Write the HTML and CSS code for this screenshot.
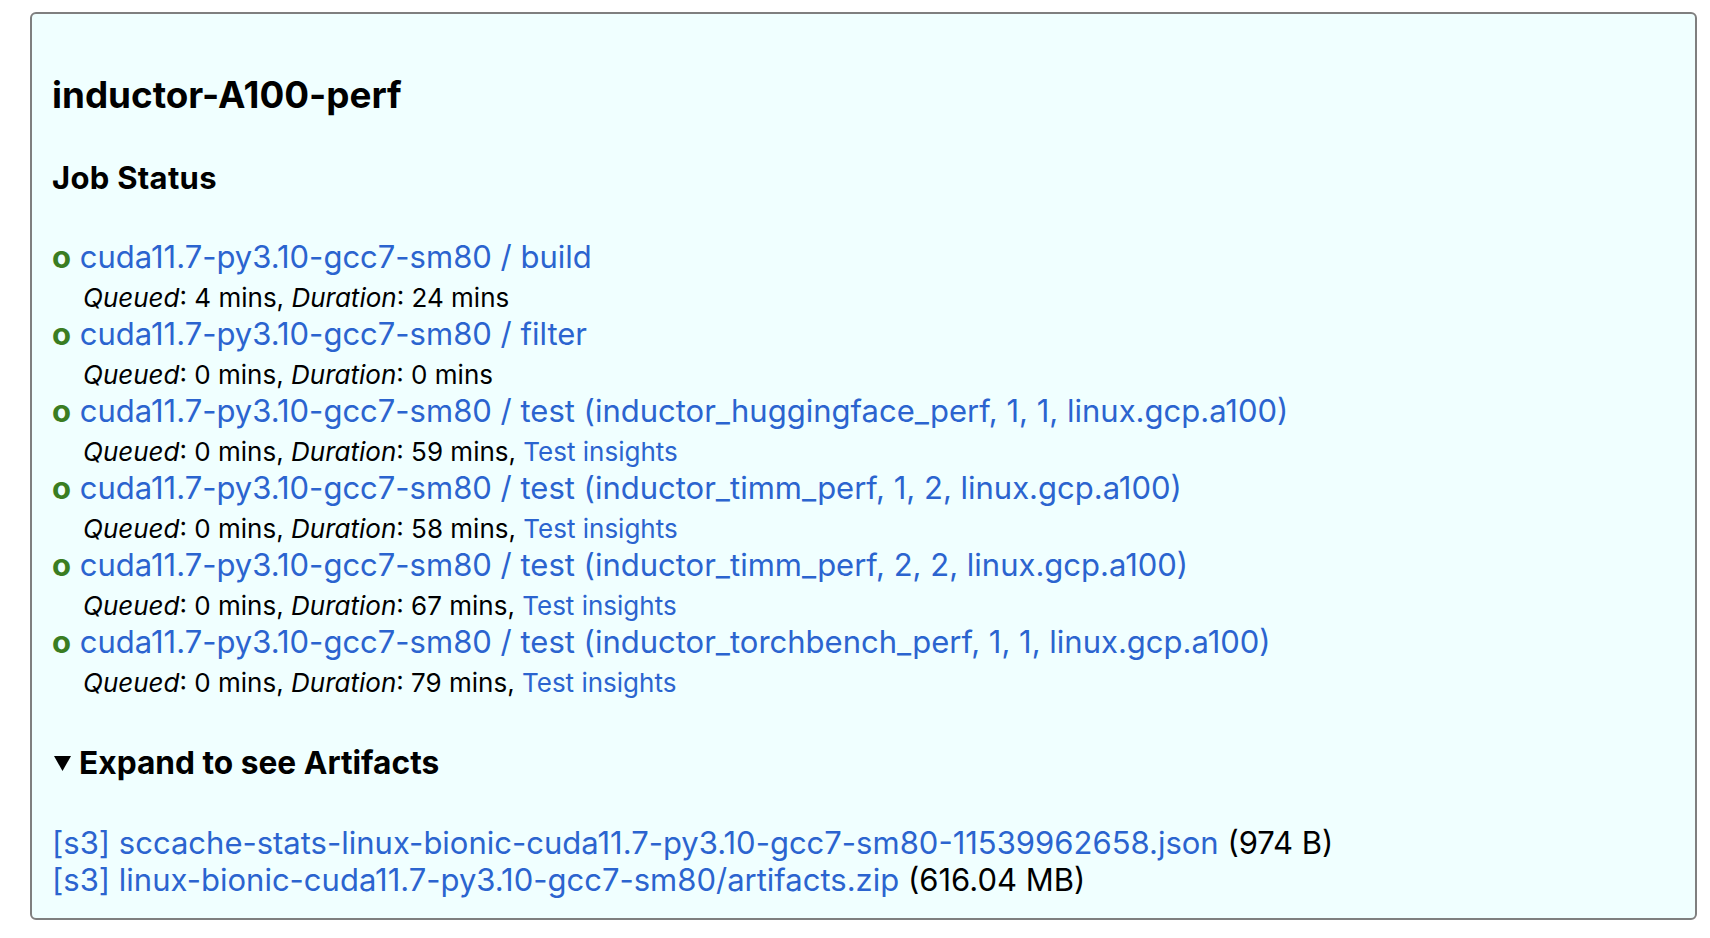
FILE: index.html
```html
<!DOCTYPE html>
<html lang="en">
<head>
<meta charset="utf-8">
<title>inductor-A100-perf</title>
<link rel="stylesheet" href="styles.css">
</head>
<body>
<div class="page">
  <div class="workflow">
    <h2 class="title">inductor-A100-perf</h2>
    <h3 class="section">Job Status</h3>
    <div class="jobs">
      <div class="job">
        <div class="job-line"><span class="status">o</span> <a href="#">cuda11.7-py3.10-gcc7-sm80 / build</a></div>
        <div class="meta"><em>Queued</em>: 4 mins, <em>Duration</em>: 24 mins</div>
      </div>
      <div class="job">
        <div class="job-line"><span class="status">o</span> <a href="#">cuda11.7-py3.10-gcc7-sm80 / filter</a></div>
        <div class="meta"><em>Queued</em>: 0 mins, <em>Duration</em>: 0 mins</div>
      </div>
      <div class="job">
        <div class="job-line"><span class="status">o</span> <a href="#">cuda11.7-py3.10-gcc7-sm80 / test (inductor_huggingface_perf, 1, 1, linux.gcp.a100)</a></div>
        <div class="meta"><em>Queued</em>: 0 mins, <em>Duration</em>: 59 mins, <a href="#">Test insights</a></div>
      </div>
      <div class="job">
        <div class="job-line"><span class="status">o</span> <a href="#">cuda11.7-py3.10-gcc7-sm80 / test (inductor_timm_perf, 1, 2, linux.gcp.a100)</a></div>
        <div class="meta"><em>Queued</em>: 0 mins, <em>Duration</em>: 58 mins, <a href="#">Test insights</a></div>
      </div>
      <div class="job">
        <div class="job-line"><span class="status">o</span> <a href="#">cuda11.7-py3.10-gcc7-sm80 / test (inductor_timm_perf, 2, 2, linux.gcp.a100)</a></div>
        <div class="meta"><em>Queued</em>: 0 mins, <em>Duration</em>: 67 mins, <a href="#">Test insights</a></div>
      </div>
      <div class="job">
        <div class="job-line"><span class="status">o</span> <a href="#">cuda11.7-py3.10-gcc7-sm80 / test (inductor_torchbench_perf, 1, 1, linux.gcp.a100)</a></div>
        <div class="meta"><em>Queued</em>: 0 mins, <em>Duration</em>: 79 mins, <a href="#">Test insights</a></div>
      </div>
    </div>
    <details class="artifacts" open>
      <summary class="artifacts-summary"><svg class="marker" width="17" height="15" viewBox="0 0 17 15"><polygon points="0,0 17,0 8.5,15" fill="#000"/></svg><span>Expand to see Artifacts</span></summary>
      <div class="artifact-list">
        <div class="artifact"><a href="#">[s3] sccache-stats-linux-bionic-cuda11.7-py3.10-gcc7-sm80-11539962658.json</a> (974 B)</div>
        <div class="artifact"><a href="#">[s3] linux-bionic-cuda11.7-py3.10-gcc7-sm80/artifacts.zip</a> (616.04 MB)</div>
      </div>
    </details>
  </div>
</div>
</body>
</html>
```

FILE: styles.css
```css
html, body {
  margin: 0;
  padding: 0;
  background: #ffffff;
}

body {
  font-family: Inter, "Liberation Sans", Arial, sans-serif;
  color: #000000;
}

.page {
  padding: 12px 13px 0 30px;
}

.workflow {
  background: #f0ffff;
  border: 2px solid #7f7f7f;
  border-radius: 6px;
  padding: 59px 20px 20px 20px;
}

.title {
  margin: 0;
  font-size: 36.8px;
  line-height: 44px;
  font-weight: 700;
}

.section {
  margin: 43px 0 0 0;
  font-size: 31px;
  line-height: 36px;
  font-weight: 700;
  letter-spacing: 0.3px;
}

.jobs {
  margin-top: 42px;
}

a {
  color: #2b64cf;
  text-decoration: none;
}

.job-line {
  font-size: 31px;
  line-height: 37px;
  white-space: nowrap;
}

.status {
  color: #3a7d22;
  font-weight: 700;
}

.meta {
  font-size: 26px;
  line-height: 34px;
  padding: 6px 0 0 31px;
}

.meta em {
  font-style: italic;
}

.artifacts {
  margin-top: 45px;
}

.artifacts-summary {
  list-style: none;
  display: flex;
  align-items: center;
  gap: 8px;
  font-size: 31.7px;
  line-height: 36px;
  font-weight: 700;
  padding-left: 2px;
  cursor: pointer;
}

.artifacts-summary::-webkit-details-marker {
  display: none;
}

.marker {
  flex: none;
  margin-top: 1px;
}

.artifact-list {
  margin-top: 43px;
}

.artifact {
  font-size: 31px;
  line-height: 37px;
  white-space: nowrap;
}
```
